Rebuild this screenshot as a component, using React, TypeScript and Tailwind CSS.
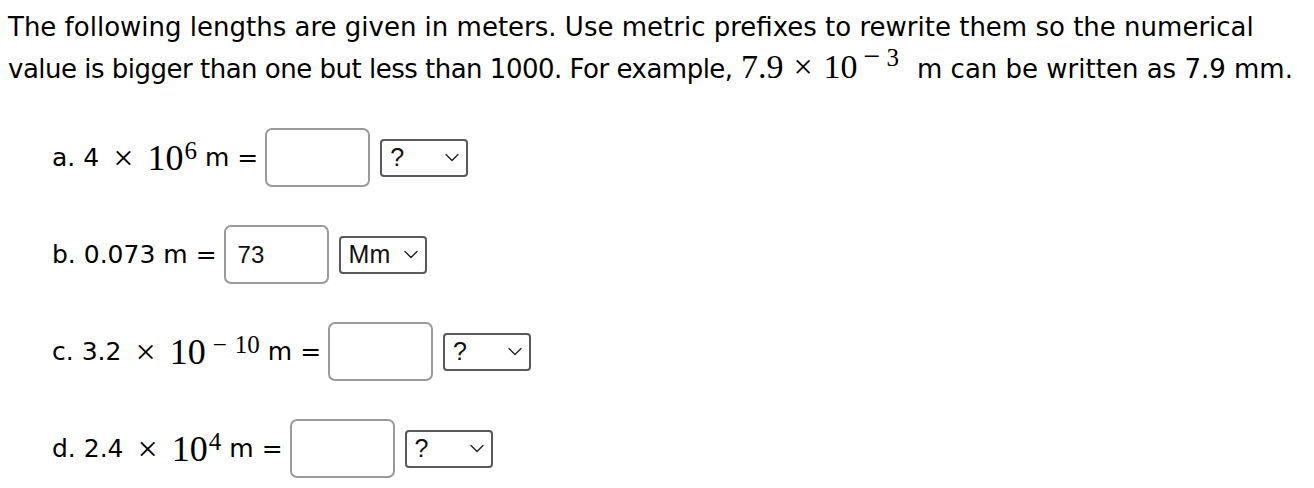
const MAIN = "font-['DejaVu_Sans',sans-serif]";
const MATH = "font-['Liberation_Serif',serif]";
const UI = "font-['Liberation_Sans',Arial,sans-serif]";

const Chevron = () => (
  <svg width="14" height="9" viewBox="0 0 14 9" fill="none">
    <polyline
      points="1,1.5 7,7.5 13,1.5"
      stroke="#222"
      strokeWidth="1.4"
      strokeLinejoin="round"
      strokeLinecap="round"
    />
  </svg>
);

const Pow = ({ base, exp, neg }: { base: string; exp: string; neg?: boolean }) => (
  <span className={`${MATH} text-[36px] whitespace-nowrap`}>
    <span className="ml-[14px] mr-[14px]">×</span>
    {base}
    <sup className="text-[25px] relative -top-[11px] ml-[1px]">
      {neg && <span className="mr-[8px] ml-[6px]">−</span>}
      {exp}
    </sup>
  </span>
);

const UnitSelect = ({ value }: { value: string }) => (
  <div
    className={`ml-[10px] w-[88px] h-[38px] border-2 border-[#5a5a5a] rounded-[4px] flex items-center pl-[8px] pr-[7px] ${UI} text-[25px] text-[#111]`}
  >
    <span>{value}</span>
    <span className={value === "?" ? "ml-auto" : "ml-[14px]"}>
      <Chevron />
    </span>
  </div>
);

const AnswerBox = ({ value }: { value?: string }) => (
  <div
    className={`ml-[7px] w-[105px] h-[59px] border-2 border-[#9a9a9a] rounded-[7px] flex items-center pl-[12px] ${UI} text-[24px] text-[#111]`}
  >
    {value}
  </div>
);

const Row = ({
  label,
  value,
  unit,
  children,
}: {
  label: React.ReactNode;
  value?: string;
  unit: string;
  children?: React.ReactNode;
}) => (
  <div className="flex items-center h-[59px]">
    <span className={`${MAIN} text-[25px] whitespace-nowrap`}>{label}</span>
    {children}
    <span className={`${MAIN} text-[25px] whitespace-nowrap ml-[8px]`}>m =</span>
    <AnswerBox value={value} />
    <UnitSelect value={unit} />
  </div>
);

export default function App() {
  return (
    <div className="w-[1314px] h-[488px] bg-white text-black pl-[8px] pt-[8px]">
      <p className={`${MAIN} text-[26px] leading-[39px] whitespace-nowrap`}>
        The following lengths are given in meters. Use metric prefixes to rewrite them so the
        numerical
        <br />
        <span className="tracking-[-0.5px]">
          value is bigger than one but less than 1000. For example,
        </span>{" "}
        <span className={`${MATH} text-[34px]`}>
          7.9<span className="ml-[10px] mr-[11px]">×</span>10
          <sup className="text-[25px] relative -top-[12px]">
            <span className="ml-[6px] mr-[6px] text-[30px]">−</span>3
          </sup>
        </span>
        <span className="ml-[18px]">m can be written as 7.9 mm.</span>
      </p>

      <div className="pl-[44px] mt-[39px] flex flex-col gap-[38px]">
        <Row label="a. 4" unit="?">
          <Pow base="10" exp="6" />
        </Row>
        <Row label="b. 0.073" value="73" unit="Mm" />
        <Row label="c. 3.2" unit="?">
          <Pow base="10" exp="10" neg />
        </Row>
        <Row label="d. 2.4" unit="?">
          <Pow base="10" exp="4" />
        </Row>
      </div>
    </div>
  );
}
